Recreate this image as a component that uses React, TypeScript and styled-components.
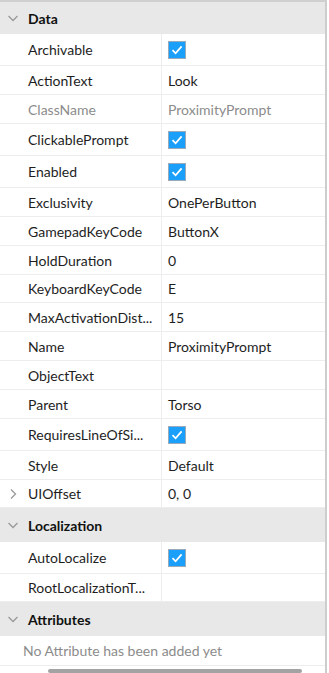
import styled, { createGlobalStyle } from "styled-components";

const GlobalStyle = createGlobalStyle`
  html, body {
    margin: 0;
    padding: 0;
    background: #ffffff;
  }
  body {
    font-family: Lato, "Noto Sans", sans-serif;
    font-size: 14px;
    color: #1e1e1e;
  }
`

const Panel = styled.div`
  width: 327px;
  height: 673px;
  box-sizing: border-box;
  border-top: 2px solid #cfcfcf;
  border-right: 2px solid #cdcdcd;
  display: flex;
  flex-direction: column;
  overflow: hidden;
`

const SectionHeader = styled.div<{ $first?: boolean }>`
  height: ${(p) => (p.$first ? 32 : 34)}px;
  flex: none;
  display: flex;
  align-items: center;
  background: #e8e8e8;
  font-weight: 700;
  color: #111;
  box-sizing: border-box;
`

const Toggle = styled.span`
  width: 28px;
  flex: none;
  display: flex;
  align-items: center;
  justify-content: center;
  padding-right: 3px;
  box-sizing: border-box;
`

const Row = styled.div<{ $tall?: boolean; $short?: boolean }>`
  height: ${(p) => (p.$tall ? 32 : p.$short ? 28 : 29)}px;
  flex: none;
  display: grid;
  grid-template-columns: 162px 1fr;
  border-bottom: 1px solid #ededed;
  box-sizing: border-box;
`

const NameCell = styled.div<{ $muted?: boolean }>`
  display: flex;
  align-items: center;
  border-right: 1px solid #ededed;
  color: ${(p) => (p.$muted ? "#8c8c8c" : "#1e1e1e")};
  white-space: nowrap;
  overflow: hidden;
  padding-right: 4px;
`

const ValueCell = styled.div<{ $muted?: boolean }>`
  display: flex;
  align-items: center;
  padding-left: 6px;
  color: ${(p) => (p.$muted ? "#8c8c8c" : "#1e1e1e")};
  white-space: nowrap;
`

const Box = styled.span`
  width: 18px;
  height: 18px;
  box-sizing: border-box;
  background: #1a9ffb;
  border: 1px solid #9ab;
  display: flex;
  align-items: center;
  justify-content: center;
`

const Empty = styled.div`
  height: 30px;
  flex: none;
  display: flex;
  align-items: center;
  padding-left: 23px;
  color: #8c8c8c;
  border-bottom: 1px solid #ededed;
  box-sizing: border-box;
`

const Scroll = styled.div`
  flex: none;
  padding: 3px 0 0 48px;
`

const Thumb = styled.div`
  width: 254px;
  height: 4px;
  border-radius: 2px;
  background: #a3a3a3;
`

function Chevron({ open }: { open: boolean }) {
  return (
    <svg width="12" height="12" viewBox="0 0 12 12">
      <path
        d={open ? "M1.5 4 L6 8.5 L10.5 4" : "M4 1.5 L8.5 6 L4 10.5"}
        fill="none"
        stroke="#9a9a9a"
        strokeWidth="1.3"
      />
    </svg>
  )
}

function Check() {
  return (
    <Box>
      <svg width="14" height="14" viewBox="0 0 14 14">
        <path d="M2.5 7.2 L5.6 10.3 L11.6 3.4" fill="none" stroke="#fff" strokeWidth="1.8" />
      </svg>
    </Box>
  )
}

type Prop = {
  name: string
  value?: string
  check?: boolean
  muted?: boolean
  expand?: boolean
  short?: boolean
}

const data: Prop[] = [
  { name: "Archivable", check: true },
  { name: "ActionText", value: "Look" },
  { name: "ClassName", value: "ProximityPrompt", muted: true },
  { name: "ClickablePrompt", check: true },
  { name: "Enabled", check: true },
  { name: "Exclusivity", value: "OnePerButton" },
  { name: "GamepadKeyCode", value: "ButtonX" },
  { name: "HoldDuration", value: "0" },
  { name: "KeyboardKeyCode", value: "E", short: true },
  { name: "MaxActivationDist...", value: "15" },
  { name: "Name", value: "ProximityPrompt" },
  { name: "ObjectText", value: "" },
  { name: "Parent", value: "Torso" },
  { name: "RequiresLineOfSi...", check: true },
  { name: "Style", value: "Default" },
  { name: "UIOffset", value: "0, 0", expand: true, short: true },
]

const localization: Prop[] = [
  { name: "AutoLocalize", check: true },
  { name: "RootLocalizationT...", value: "", short: true },
]

function PropRow({ p }: { p: Prop }) {
  return (
    <Row $tall={p.check} $short={p.short}>
      <NameCell $muted={p.muted}>
        <Toggle>{p.expand && <Chevron open={false} />}</Toggle>
        {p.name}
      </NameCell>
      <ValueCell $muted={p.muted}>{p.check ? <Check /> : p.value}</ValueCell>
    </Row>
  )
}

function Section({ title, first }: { title: string; first?: boolean }) {
  return (
    <SectionHeader $first={first}>
      <Toggle>
        <Chevron open />
      </Toggle>
      {title}
    </SectionHeader>
  )
}

export default function App() {
  return (
    <>
      <GlobalStyle />
      <Panel>
        <Section title="Data" first />
        {data.map((p) => (
          <PropRow key={p.name} p={p} />
        ))}
        <Section title="Localization" />
        {localization.map((p) => (
          <PropRow key={p.name} p={p} />
        ))}
        <Section title="Attributes" />
        <Empty>No Attribute has been added yet</Empty>
        <Scroll>
          <Thumb />
        </Scroll>
      </Panel>
    </>
  )
}
